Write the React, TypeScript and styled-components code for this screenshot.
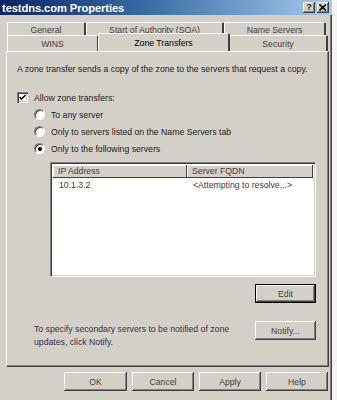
import React from 'react'
import styled, { createGlobalStyle, css } from 'styled-components'

const face = '#d4d0c8'

const GlobalStyle = createGlobalStyle`
	html, body {
		margin: 0;
		padding: 0;
		background: #f4f4f4;
	}
	body {
		font-family: 'Liberation Sans', Arial, sans-serif;
		font-size: 8.7px;
		color: #1a1a1a;
	}
`

const raised = css`
	box-shadow: inset -1px -1px #404040, inset 1px 1px #fff, inset -2px -2px #808080, inset 2px 2px ${face};
`

const Window = styled.div`
	width: 332px;
	height: 400px;
	background: ${face};
	box-shadow: inset -1px 0 #404040, inset -2px 0 #808080;
	display: flex;
	flex-direction: column;
	overflow: hidden;
`

const TitleBar = styled.div`
	height: 15px;
	display: flex;
	align-items: center;
	justify-content: space-between;
	padding: 0 3px 0 2px;
	background: linear-gradient(to right, #0a246a 0%, #3a6ea5 45%, #a6caf0 100%);
`

const Title = styled.div`
	color: #fff;
	font-weight: bold;
	font-size: 11.2px;
	letter-spacing: -0.1px;
`

const TitleButtons = styled.div`
	display: flex;
	gap: 2px;
`

const TitleButton = styled.div`
	width: 12px;
	height: 11px;
	background: ${face};
	${raised};
	display: flex;
	align-items: center;
	justify-content: center;
	font-weight: bold;
	font-size: 9px;
	line-height: 1;
`

const TabArea = styled.div`
	display: flex;
	flex-direction: column;
	padding: 7px 0 0 7px;
`

const TabRow = styled.div<{ $front?: boolean }>`
	display: flex;
	height: ${p => (p.$front ? 16 : 14)}px;
	margin-top: ${p => (p.$front ? -1 : 0)}px;
`

const Tab = styled.div<{ $w: number; $active?: boolean }>`
	width: ${p => p.$w}px;
	box-sizing: border-box;
	display: flex;
	align-items: center;
	justify-content: center;
	background: ${face};
	color: #404040;
	border-top: 1px solid #fff;
	border-left: 1px solid #fff;
	border-right: 2px solid #404040;
	border-top-left-radius: 2px;
	border-top-right-radius: 2px;
	${p =>
		p.$active &&
		css`
			color: #000;
			margin-top: -2px;
			height: 18px;
			position: relative;
			z-index: 1;
			margin-left: -1px;
			margin-right: -1px;
			width: ${p.$w + 2}px;
		`}
`

const Panel = styled.div`
	margin: 0 3px 0 6px;
	height: 316px;
	box-sizing: border-box;
	border-top: 1px solid #fff;
	border-left: 1px solid #fff;
	border-right: 1px solid #404040;
	border-bottom: 1px solid #404040;
	box-shadow: inset -1px -1px #808080;
	padding: 10px 12px 0 10px;
	display: flex;
	flex-direction: column;
`

const Description = styled.div`
	height: 14px;
	line-height: 14px;
`

const OptionRow = styled.div<{ $indent?: number }>`
	display: flex;
	align-items: center;
	gap: 6px;
	height: 17px;
	padding-left: ${p => p.$indent ?? 0}px;
`

const CheckBox = styled.div`
	width: 11px;
	height: 11px;
	box-sizing: border-box;
	background: #fff;
	box-shadow: inset 1px 1px #808080, inset 2px 2px #404040, inset -1px -1px #fff, inset -2px -2px ${face};
	display: flex;
	align-items: center;
	justify-content: center;
`

const Radio = styled.div<{ $on?: boolean }>`
	width: 11px;
	height: 11px;
	border-radius: 50%;
	box-sizing: border-box;
	background: #fff;
	border-top: 1px solid #808080;
	border-left: 1px solid #808080;
	border-right: 1px solid #fff;
	border-bottom: 1px solid #fff;
	box-shadow: inset 1px 1px #404040;
	display: flex;
	align-items: center;
	justify-content: center;
	&::after {
		content: '';
		display: ${p => (p.$on ? 'block' : 'none')};
		width: 4px;
		height: 4px;
		border-radius: 50%;
		background: #000;
	}
`

const ListBox = styled.div`
	margin: 5px 0 0 33px;
	height: 115px;
	background: #fff;
	box-sizing: border-box;
	border-top: 1px solid #808080;
	border-left: 1px solid #808080;
	border-right: 1px solid #fff;
	border-bottom: 1px solid #fff;
	box-shadow: inset 1px 1px #404040, inset -1px -1px ${face};
	padding: 2px;
`

const ListGrid = styled.div`
	display: grid;
	grid-template-columns: 134px 1fr;
`

const HeaderCell = styled.div`
	height: 13px;
	line-height: 13px;
	padding-left: 5px;
	background: ${face};
	color: #404040;
	box-shadow: inset -1px -1px #404040, inset 1px 1px #fff;
`

const Cell = styled.div`
	height: 15px;
	line-height: 15px;
	padding-left: 6px;
	color: #404040;
`

const Button = styled.div<{ $w?: number; $default?: boolean }>`
	width: ${p => p.$w ?? 61}px;
	height: 19px;
	box-sizing: border-box;
	background: ${face};
	${raised};
	display: flex;
	align-items: center;
	justify-content: center;
	color: #404040;
	${p =>
		p.$default &&
		css`
			box-shadow: inset 0 0 0 1px #000, inset -2px -2px #404040, inset 2px 2px #fff, inset -3px -3px #808080;
		`}
`

const EditRow = styled.div`
	display: flex;
	justify-content: flex-end;
	margin-top: 7px;
`

const NotifyRow = styled.div`
	display: flex;
	justify-content: space-between;
	align-items: flex-start;
	margin-top: 18px;
	padding-left: 17px;
`

const NotifyText = styled.div`
	width: 205px;
	line-height: 13px;
	padding-top: 2px;
	color: #303050;
`

const Footer = styled.div`
	display: flex;
	justify-content: flex-end;
	gap: 5px;
	padding: 5px 4px 0 0;
`

export default function App() {
	return (
		<>
			<GlobalStyle />
			<Window>
				<TitleBar>
					<Title>testdns.com Properties</Title>
					<TitleButtons>
						<TitleButton>?</TitleButton>
						<TitleButton>
							<svg width="8" height="7" viewBox="0 0 8 7">
								<path d="M0.5 0.5 L7 6.5 M7 0.5 L0.5 6.5" stroke="#000" strokeWidth="1.6" />
							</svg>
						</TitleButton>
					</TitleButtons>
				</TitleBar>

				{/* Two rows of property sheet tabs */}
				<TabArea>
					<TabRow>
						<Tab $w={79}>General</Tab>
						<Tab $w={138}>Start of Authority (SOA)</Tab>
						<Tab $w={102}>Name Servers</Tab>
					</TabRow>
					<TabRow $front>
						<Tab $w={92}>WINS</Tab>
						<Tab $w={130} $active>Zone Transfers</Tab>
						<Tab $w={99}>Security</Tab>
					</TabRow>
				</TabArea>

				<Panel>
					<Description>A zone transfer sends a copy of the zone to the servers that request a copy.</Description>
					<OptionRow style={{ marginTop: 13 }}>
						<CheckBox>
							<svg width="7" height="7" viewBox="0 0 7 7">
								<path d="M0.5 3 L2.5 5 L6.5 1" stroke="#000" strokeWidth="1.5" fill="none" />
							</svg>
						</CheckBox>
						Allow zone transfers:
					</OptionRow>
					<OptionRow $indent={17}>
						<Radio />
						To any server
					</OptionRow>
					<OptionRow $indent={17}>
						<Radio />
						Only to servers listed on the Name Servers tab
					</OptionRow>
					<OptionRow $indent={17}>
						<Radio $on />
						Only to the following servers
					</OptionRow>

					<ListBox>
						<ListGrid>
							<HeaderCell>IP Address</HeaderCell>
							<HeaderCell>Server FQDN</HeaderCell>
							<Cell>10.1.3.2</Cell>
							<Cell>&lt;Attempting to resolve...&gt;</Cell>
						</ListGrid>
					</ListBox>

					<EditRow>
						<Button $default>Edit</Button>
					</EditRow>

					<NotifyRow>
						<NotifyText>To specify secondary servers to be notified of zone updates, click Notify.</NotifyText>
						<Button>Notify...</Button>
					</NotifyRow>
				</Panel>

				<Footer>
					<Button $w={63}>OK</Button>
					<Button $w={62}>Cancel</Button>
					<Button $w={62}>Apply</Button>
					<Button $w={62}>Help</Button>
				</Footer>
			</Window>
		</>
	)
}
